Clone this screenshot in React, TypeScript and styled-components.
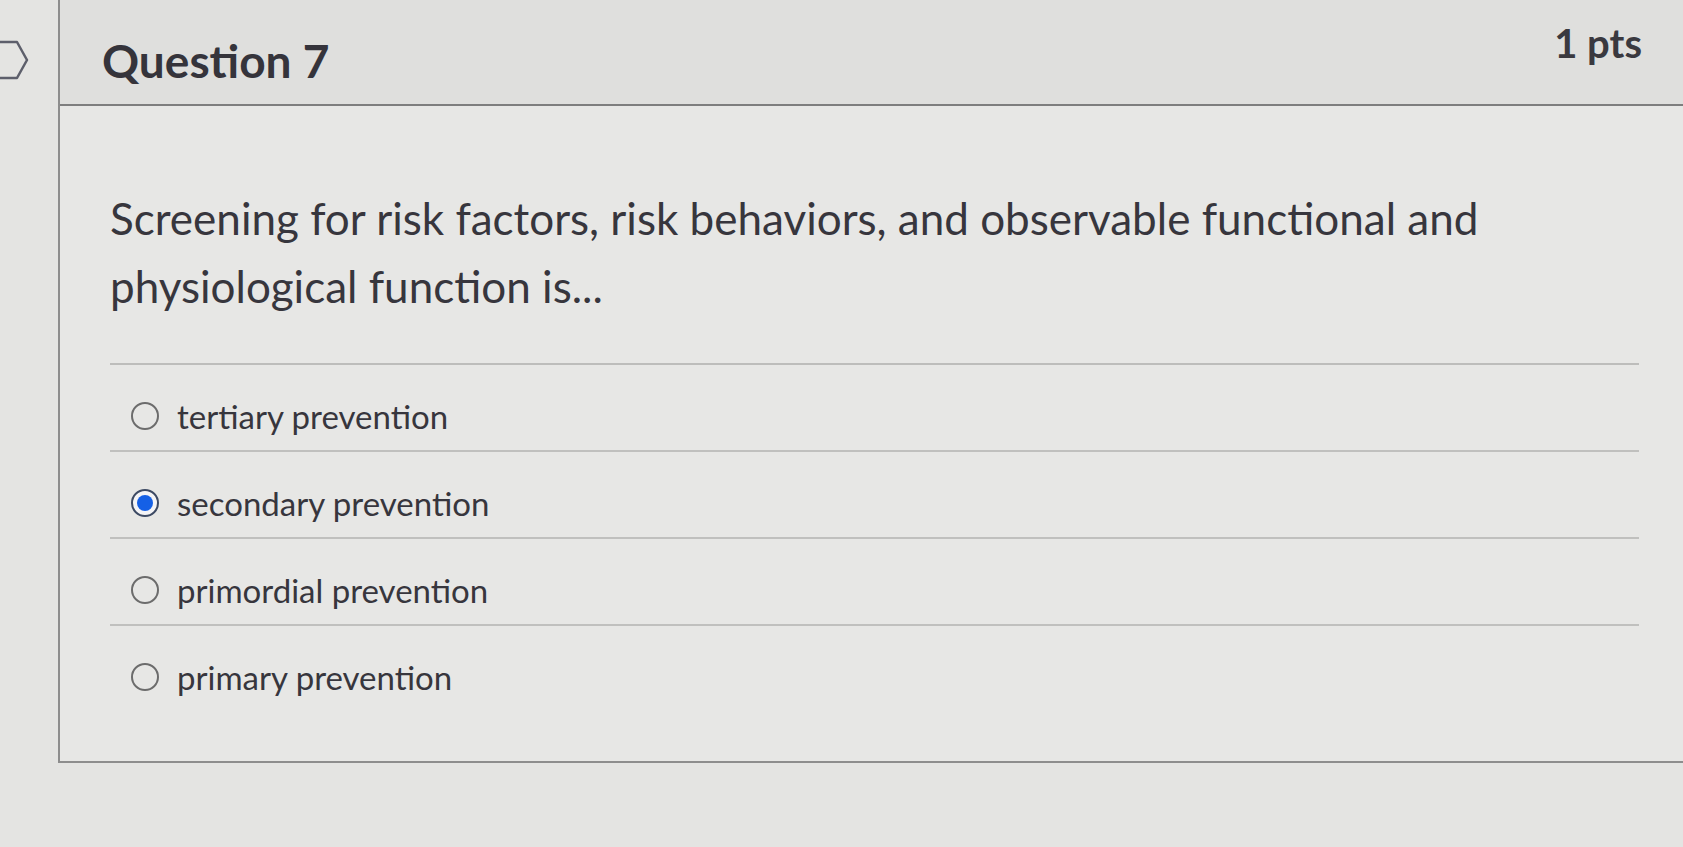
import React, { useState } from "react";
import styled, { createGlobalStyle } from "styled-components";

const GlobalStyle = createGlobalStyle`
  html, body {
    margin: 0;
    padding: 0;
    background: #e4e4e2;
    overflow: hidden;
  }
  body {
    font-family: Lato, "Open Sans", Arial, sans-serif;
    color: #37363d;
  }
`;

const PageEl = styled.div`
  display: flex;
  width: 1683px;
  height: 847px;
  background: #e4e4e2;
`;

const GutterEl = styled.div`
  width: 58px;
  flex: none;
  padding-top: 40px;
  box-sizing: border-box;
`;

const CardEl = styled.section`
  flex: 1;
  align-self: flex-start;
  border-left: 2px solid #8d8d8d;
  border-bottom: 2px solid #8d8d8d;
  background: #e7e7e5;
`;

const HeaderEl = styled.header`
  display: flex;
  justify-content: space-between;
  align-items: flex-start;
  height: 106px;
  box-sizing: border-box;
  padding: 0 41px 0 42px;
  background: #dfdfdd;
  border-bottom: 2px solid #7e7e7e;
`;

const TitleEl = styled.h2`
  margin: 33px 0 0;
  font-size: 46px;
  line-height: 56px;
  font-weight: 700;
  color: #35343b;
`;

const PointsEl = styled.div`
  margin-top: 17px;
  font-size: 40px;
  line-height: 52px;
  font-weight: 700;
  color: #3a393f;
`;

const BodyEl = styled.div`
  padding: 78px 44px 50px 50px;
`;

const QuestionText = styled.p`
  margin: 0;
  max-width: 1400px;
  font-size: 44px;
  line-height: 68px;
  color: #37363d;
`;

const AnswerList = styled.div`
  margin-top: 43px;
  border-top: 2px solid #bdbdbb;
`;

const AnswerRow = styled.label<{ $last?: boolean }>`
  display: flex;
  align-items: center;
  gap: 18px;
  padding: 33px 0 16px 21px;
  border-bottom: ${(p) => (p.$last ? "none" : "2px solid #c0c0be")};
  cursor: pointer;
`;

const RadioEl = styled.span<{ $checked: boolean }>`
  width: 28px;
  height: 28px;
  flex: none;
  border-radius: 50%;
  box-sizing: border-box;
  border: 2px solid ${(p) => (p.$checked ? "#3d4a63" : "#6c6c6c")};
  background: ${(p) => (p.$checked ? "#f4f4f6" : "transparent")};
  display: flex;
  align-items: center;
  justify-content: center;

  &::after {
    content: "";
    width: 16px;
    height: 16px;
    border-radius: 50%;
    background: ${(p) => (p.$checked ? "#1560e6" : "transparent")};
  }
`;

const AnswerText = styled.span`
  font-size: 33px;
  line-height: 36px;
  color: #37363d;
`;

const FlagIcon = () => (
  <svg width="30" height="40" viewBox="0 0 30 40" fill="none">
    <path
      d="M-4 2 H17 L27 20 L17 38 H-4"
      stroke="#5d5f6b"
      strokeWidth="2.5"
      strokeLinejoin="round"
    />
  </svg>
);

const answers = [
  "tertiary prevention",
  "secondary prevention",
  "primordial prevention",
  "primary prevention",
];

export default function App() {
  const [selected, setSelected] = useState(1);

  return (
    <>
      <GlobalStyle />
      <PageEl>
        <GutterEl>
          <FlagIcon />
        </GutterEl>
        <CardEl>
          <HeaderEl>
            <TitleEl>Question 7</TitleEl>
            <PointsEl>1 pts</PointsEl>
          </HeaderEl>
          <BodyEl>
            <QuestionText>
              Screening for risk factors, risk behaviors, and observable
              functional and physiological function is...
            </QuestionText>
            <AnswerList>
              {answers.map((a, i) => (
                <AnswerRow
                  key={a}
                  $last={i === answers.length - 1}
                  onClick={() => setSelected(i)}
                >
                  <RadioEl $checked={selected === i} />
                  <AnswerText>{a}</AnswerText>
                </AnswerRow>
              ))}
            </AnswerList>
          </BodyEl>
        </CardEl>
      </PageEl>
    </>
  );
}
